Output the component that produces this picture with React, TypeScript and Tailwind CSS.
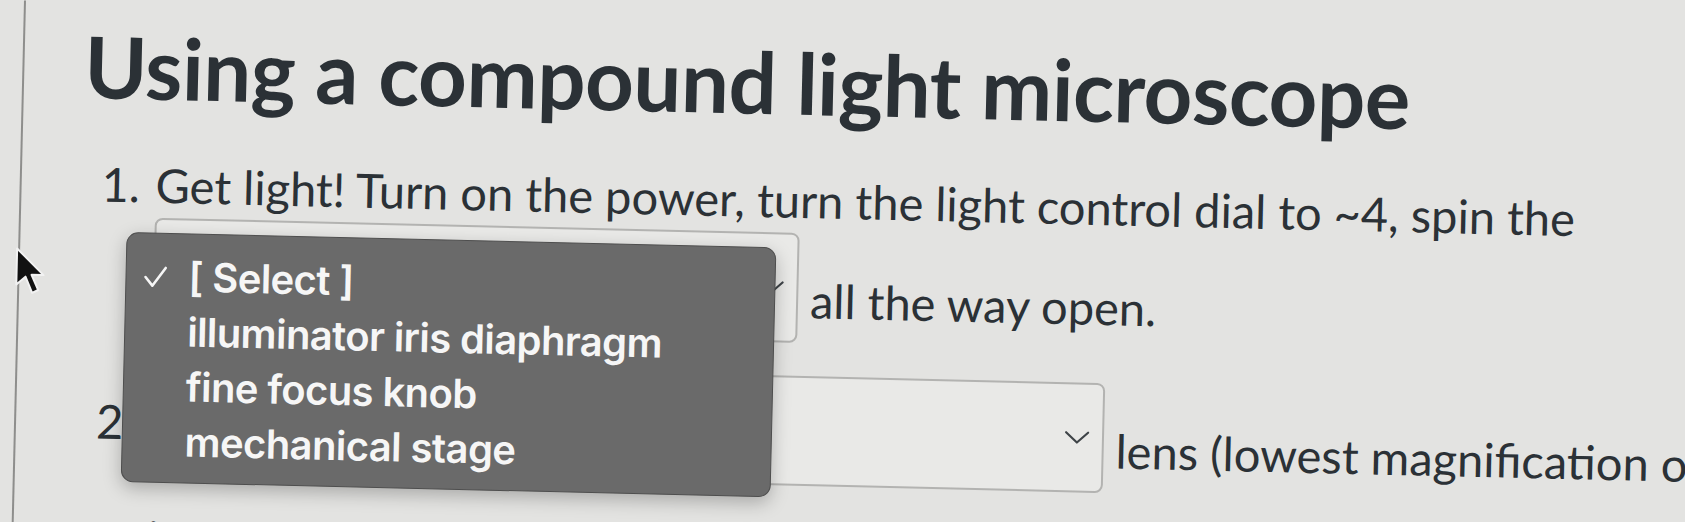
const ink = 'text-[#2b3136]';

const Chevron = () => (
  <svg width="26" height="14" viewBox="0 0 26 14" fill="none">
    <path d="M2 2 L13 12 L24 2" stroke="#3f4448" strokeWidth="2.2" strokeLinecap="round" strokeLinejoin="round" />
  </svg>
);

const Select = ({ width }: { width: string }) => (
  <div
    className={`${width} flex h-[110px] shrink-0 items-center justify-end rounded-[8px] border-2 border-[#b3b3b1] bg-[#e9e9e7] pr-[12px]`}
  >
    <Chevron />
  </div>
);

const options = ['[ Select ]', 'illuminator iris diaphragm', 'fine focus knob', 'mechanical stage'];

const OptionsMenu = () => (
  <div className="absolute left-[132px] top-[229px] z-10 h-[250px] w-[650px] rounded-[12px] border border-[#4e4e4e] bg-[#6a6a6a] pt-[15px] shadow-[0_6px_18px_rgba(0,0,0,0.25)]">
    {options.map((opt, i) => (
      <div
        key={opt}
        className="flex h-[55px] items-center font-['Inter',sans-serif] text-[40px] font-semibold leading-[55px] tracking-[-0.015em] text-[#f6f6f6]"
      >
        <span className="flex w-[62px] shrink-0 pl-[16px]">
          {i === 0 && (
            <svg width="26" height="24" viewBox="0 0 26 24" fill="none">
              <path d="M3 12.5 L10 21 L23 3" stroke="#f6f6f6" strokeWidth="2.6" strokeLinecap="round" strokeLinejoin="round" />
            </svg>
          )}
        </span>
        <span>{opt}</span>
      </div>
    ))}
  </div>
);

const Cursor = () => (
  <svg className="absolute left-[21px] top-[246px] z-20" width="32" height="50" viewBox="0 0 32 50">
    <path d="M2 2 L2 38 L11 30 L18 46 L24 43 L17 28 L29 28 Z" fill="#111" stroke="#f2f2f2" strokeWidth="2" strokeLinejoin="round" />
  </svg>
);

export default function App() {
  return (
    <div className="h-[522px] w-[1685px] overflow-hidden bg-[#e3e3e1]">
      <div className="relative flex h-[600px] w-[2100px] origin-top-left rotate-[1.35deg] font-['Lato',sans-serif]">
        <div className="w-[26px] shrink-0 border-r-2 border-[#8e8e8c]" />

        <main className={`flex-1 pl-[60px] ${ink}`}>
          <h1 className="mt-[12px] text-[85px] font-bold leading-[1.2] tracking-[-0.005em]">
            Using a compound light microscope
          </h1>

          <ol className="ml-[20px] mt-[33px] text-[47px] leading-[69px]">
            <li className="flex">
              <span className="w-[54px] shrink-0">1.</span>
              <div>
                <p>Get light! Turn on the power, turn the light control dial to ~4, spin the</p>
                <div className="-mt-[2px] flex items-end gap-[12px]">
                  <Select width="w-[645px]" />
                  <span className="mb-[8px]">all the way open.</span>
                </div>
              </div>
            </li>

            <li className="mt-[33px] flex">
              <span className="w-[54px] shrink-0 self-start pt-[27px]">2.</span>
              <div>
                <div className="flex items-end gap-[12px]">
                  <Select width="w-[954px]" />
                  <span className="mb-[8px] whitespace-nowrap">lens (lowest magnification objective) is clicked</span>
                </div>
                <p className="mt-[33px]">into place over the opening in the stage.</p>
              </div>
            </li>
          </ol>
        </main>

        <OptionsMenu />
        <Cursor />
      </div>
    </div>
  );
}
